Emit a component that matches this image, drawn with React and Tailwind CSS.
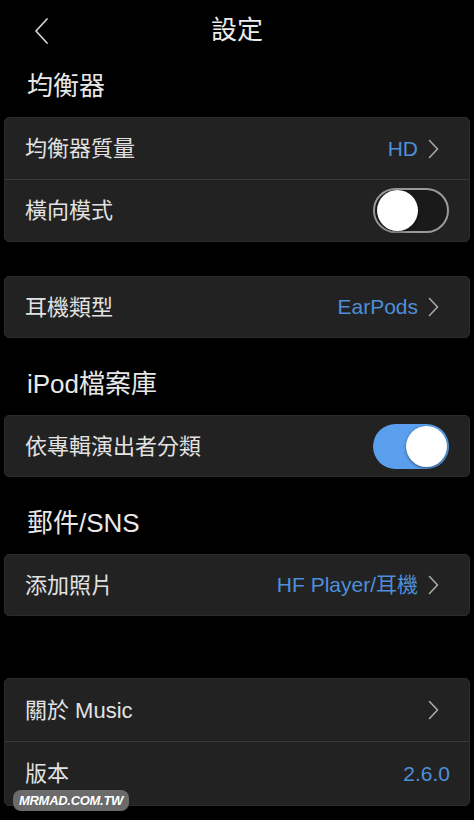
import React from "react";

const FONT = {
  fontFamily: '"Liberation Sans", "Noto Sans CJK TC", sans-serif',
};

const Chevron = () => (
  <svg width="11" height="20" viewBox="0 0 11 20" fill="none" className="ml-[10px]">
    <path d="M1.5 1.5 L9.5 10 L1.5 18.5" stroke="#a8a8a8" strokeWidth="1.6" strokeLinecap="round" strokeLinejoin="round" />
  </svg>
);

const Toggle = ({ on }) => (
  <div
    className={`w-[76px] h-[45px] rounded-full flex items-center p-[2px] ${
      on ? "bg-[#5a9fee] justify-end" : "bg-[#1a1a1a] border-2 border-[#9a9a9a] justify-start"
    }`}
  >
    <div className="w-[41px] h-[41px] rounded-full bg-white shadow-[0_1px_3px_rgba(0,0,0,0.5)]" />
  </div>
);

const Row = ({ label, value, chevron, toggle, divider, h = "h-[60px]", pr = "pr-[30px]" }) => (
  <div
    className={`${h} flex items-center justify-between pl-[20px] ${toggle !== undefined ? "pr-[20px]" : pr} ${
      divider ? "border-b border-[#393939]" : ""
    }`}
  >
    <span className="text-[22px] text-[#e2e2e2]">{label}</span>
    <div className="flex items-center">
      {value && <span className="text-[21px] text-[#4d8fda]">{value}</span>}
      {chevron && <Chevron />}
      {toggle !== undefined && <Toggle on={toggle} />}
    </div>
  </div>
);

const Card = ({ children }) => (
  <div className="mx-[4px] bg-[#222222] rounded-[5px] border border-[#2c2c2c] overflow-hidden">{children}</div>
);

const Heading = ({ children, h }) => (
  <div className={`${h} flex items-center pl-[27px] text-[26px] text-[#e8e8e8]`}>{children}</div>
);

export default function App() {
  return (
    <div className="w-[474px] h-[820px] bg-black overflow-hidden relative" style={FONT}>
      <div className="h-[60px] flex items-center justify-center relative">
        <svg width="16" height="28" viewBox="0 0 16 28" fill="none" className="absolute left-[34px] top-[17px]">
          <path d="M13 2 L2 14 L13 26" stroke="#cfcfcf" strokeWidth="1.8" strokeLinecap="round" strokeLinejoin="round" />
        </svg>
        <span className="text-[26px] text-[#ececec]">設定</span>
      </div>

      <Heading h="h-[57px] pb-[4px]">均衡器</Heading>
      <Card>
        <Row label="均衡器質量" value="HD" chevron divider h="h-[62px]" />
        <Row label="橫向模式" toggle={false} h="h-[61px]" />
      </Card>

      <div className="h-[34px]" />
      <Card>
        <Row label="耳機類型" value="EarPods" chevron />
      </Card>

      <Heading h="h-[77px] pt-[16px]">iPod檔案庫</Heading>
      <Card>
        <Row label="依專輯演出者分類" toggle={true} />
      </Card>

      <Heading h="h-[77px] pt-[16px]">郵件/SNS</Heading>
      <Card>
        <Row label="添加照片" value="HF Player/耳機" chevron />
      </Card>

      <div className="h-[62px]" />
      <Card>
        <Row label="關於 Music" chevron divider h="h-[63px]" />
        <Row label="版本" value="2.6.0" pr="pr-[19px]" h="h-[63px]" />
      </Card>

      <div className="absolute left-[13px] top-[790px] h-[21px] px-[6px] rounded-[8px] bg-[#6b6b6b] flex items-center">
        <span className="text-[13px] font-bold italic text-white tracking-[-0.3px]">MRMAD.COM.TW</span>
      </div>
    </div>
  );
}
